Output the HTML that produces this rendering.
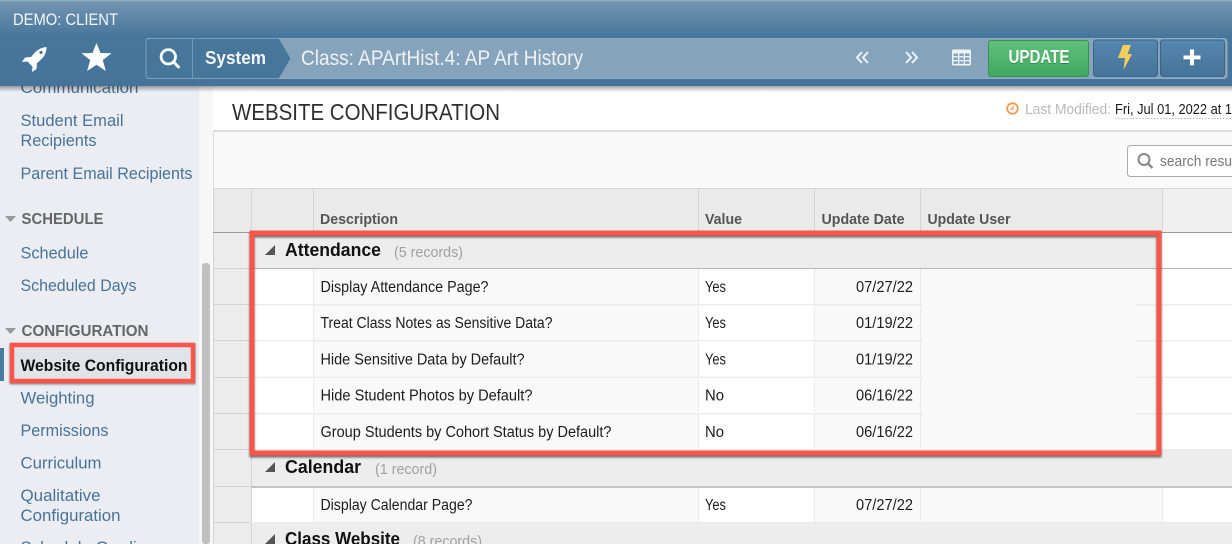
<!DOCTYPE html>
<html><head><meta charset="utf-8"><title>Website Configuration</title>
<style>
html,body{margin:0;padding:0;background:#fff;width:1232px;height:544px;overflow:hidden}
svg{display:block}
text{font-family:"Liberation Sans",sans-serif;white-space:pre}
.nav{fill:#467399;font-size:17px}
.sec{fill:#666;font-size:16px;font-weight:bold}
.th{fill:#555;font-size:15px;font-weight:bold}
.td{fill:#1c1c1c;font-size:15.5px}
.gr{fill:#111;font-size:18.5px;font-weight:bold}
.ct{fill:#a0a0a0;font-size:15px}
</style></head>
<body>
<svg width="1232" height="544" viewBox="0 0 1232 544" xmlns="http://www.w3.org/2000/svg">
<defs>
<linearGradient id="hd" x1="0" y1="0" x2="0" y2="1"><stop offset="0" stop-color="#7496b2"/><stop offset=".43" stop-color="#47769b"/><stop offset="1" stop-color="#457399"/></linearGradient>
<linearGradient id="gb" x1="0" y1="0" x2="0" y2="1"><stop offset="0" stop-color="#60c27d"/><stop offset="1" stop-color="#3fa75c"/></linearGradient>
<linearGradient id="bb" x1="0" y1="0" x2="0" y2="1"><stop offset="0" stop-color="#5687b0"/><stop offset="1" stop-color="#457399"/></linearGradient>
<linearGradient id="sh" x1="0" y1="0" x2="0" y2="1"><stop offset="0" stop-color="#000" stop-opacity=".35"/><stop offset="1" stop-color="#000" stop-opacity="0"/></linearGradient>
</defs>

<!-- sidebar -->
<rect x="0" y="0" width="199" height="544" fill="#ecedf3"/>
<rect x="199" y="0" width="14" height="544" fill="#f7f7f7"/>
<rect x="202" y="263" width="8" height="281" rx="3" fill="#c0c0c0"/>
<text class="nav" x="20.500" y="93" textLength="118" lengthAdjust="spacingAndGlyphs">Communication</text>
<text class="nav" x="20.500" y="126" textLength="103" lengthAdjust="spacingAndGlyphs">Student Email</text>
<text class="nav" x="20.500" y="146" textLength="76" lengthAdjust="spacingAndGlyphs">Recipients</text>
<text class="nav" x="20.500" y="179" textLength="172" lengthAdjust="spacingAndGlyphs">Parent Email Recipients</text>
<polygon points="5,216 16,216 10.500,222" fill="#999"/>
<text class="sec" x="21.500" y="224" textLength="82" lengthAdjust="spacingAndGlyphs">SCHEDULE</text>
<text class="nav" x="20.500" y="258.500" textLength="68" lengthAdjust="spacingAndGlyphs">Schedule</text>
<text class="nav" x="20.500" y="291" textLength="116" lengthAdjust="spacingAndGlyphs">Scheduled Days</text>
<polygon points="5,328 16,328 10.500,334" fill="#999"/>
<text class="sec" x="21.500" y="336" textLength="127" lengthAdjust="spacingAndGlyphs">CONFIGURATION</text>
<rect x="0" y="348" width="4" height="33" fill="#4a7ba2"/>
<rect x="12" y="345" width="181" height="36" fill="#e2e3e8" stroke="#fb5549" stroke-width="4.500" style="filter:drop-shadow(0 1.500px 1px rgba(0,0,0,.5))"/>
<text x="20.500" y="371" font-size="17" font-weight="bold" fill="#111" textLength="167" lengthAdjust="spacingAndGlyphs">Website Configuration</text>
<text class="nav" x="20.500" y="403.500" textLength="74" lengthAdjust="spacingAndGlyphs">Weighting</text>
<text class="nav" x="20.500" y="436" textLength="88" lengthAdjust="spacingAndGlyphs">Permissions</text>
<text class="nav" x="20.500" y="468.500" textLength="81" lengthAdjust="spacingAndGlyphs">Curriculum</text>
<text class="nav" x="20.500" y="501" textLength="80" lengthAdjust="spacingAndGlyphs">Qualitative</text>
<text class="nav" x="20.500" y="521" textLength="100" lengthAdjust="spacingAndGlyphs">Configuration</text>
<text class="nav" x="20.500" y="553" textLength="135" lengthAdjust="spacingAndGlyphs">Schedule Grading</text>

<!-- page title -->
<rect x="213" y="86" width="1019" height="44" fill="#fff"/>
<text x="232" y="120" font-size="23.500" fill="#2e2e2e" textLength="268" lengthAdjust="spacingAndGlyphs">WEBSITE CONFIGURATION</text>
<circle cx="1012.500" cy="108.500" r="5.300" fill="none" stroke="#f59a4d" stroke-width="1.800"/>
<path d="M1013 105.500v3.500h-3" fill="none" stroke="#f59a4d" stroke-width="1.300"/>
<text x="1025" y="114" font-size="14.500" fill="#b9b9b9" textLength="86" lengthAdjust="spacingAndGlyphs">Last Modified:</text>
<text x="1115" y="114" font-size="14.500" fill="#1a1a1a" textLength="117" lengthAdjust="spacingAndGlyphs">Fri, Jul 01, 2022 at 1</text>
<line x1="1115" y1="118.500" x2="1232" y2="118.500" stroke="#bbb" stroke-dasharray="1.500 1.500"/>

<!-- toolbar -->
<rect x="213" y="130" width="1019" height="59" fill="#f9f9f9"/>
<rect x="213" y="130" width="1019" height="2" fill="#ddd"/>
<rect x="213" y="130" width="1" height="59" fill="#ddd"/>
<rect x="1127.500" y="145.500" width="110" height="31" rx="3" fill="#fff" stroke="#aaa"/>
<circle cx="1144" cy="159.500" r="5.500" fill="none" stroke="#888" stroke-width="2"/>
<line x1="1148" y1="163.500" x2="1152.500" y2="168" stroke="#888" stroke-width="2.300"/>
<text x="1160" y="166" font-size="15" fill="#777" textLength="72" lengthAdjust="spacingAndGlyphs">search resu</text>

<!-- table body backgrounds -->
<rect x="213" y="189" width="1019" height="355" fill="#fff"/>
<rect x="213" y="189" width="949" height="43" fill="#eaeaea"/>
<rect x="1162" y="189" width="70" height="43" fill="#efefef"/>
<rect x="213" y="232" width="38" height="312" fill="#ececec"/>
<rect x="313" y="269" width="385" height="253" fill="#f9f9f9"/>
<rect x="814" y="269" width="348" height="253" fill="#f9f9f9"/>
<rect x="251" y="233" width="911" height="35" fill="#ededed"/>
<rect x="251" y="450" width="981" height="36" fill="#ededed"/>
<rect x="251" y="523" width="981" height="21" fill="#ededed"/>

<!-- column lines -->
<g fill="#d4d4d4">
<rect x="213" y="189" width="1" height="355"/>
<rect x="251" y="189" width="1" height="355"/>
<rect x="313" y="189" width="1" height="43"/>
<rect x="698" y="189" width="1" height="43"/>
<rect x="814" y="189" width="1" height="43"/>
<rect x="920" y="189" width="1" height="43"/>
<rect x="1162" y="189" width="1" height="43"/>
</g>
<g stroke="#dedede" stroke-dasharray="1 1">
<line x1="313.500" y1="269" x2="313.500" y2="450"/><line x1="698.500" y1="269" x2="698.500" y2="450"/><line x1="814.500" y1="269" x2="814.500" y2="450"/><line x1="920.500" y1="269" x2="920.500" y2="450"/>
<line x1="313.500" y1="487" x2="313.500" y2="522"/><line x1="698.500" y1="487" x2="698.500" y2="522"/><line x1="814.500" y1="487" x2="814.500" y2="522"/><line x1="920.500" y1="487" x2="920.500" y2="522"/><line x1="1162.500" y1="487" x2="1162.500" y2="522"/>
</g>

<!-- row lines -->
<rect x="213" y="188" width="1019" height="1" fill="#d6d6d6"/>
<rect x="213" y="232" width="1019" height="1" fill="#9a9a9a"/>
<rect x="251" y="268" width="981" height="1" fill="#b5b5b5"/>
<rect x="251" y="486" width="981" height="2" fill="#c4c4c4"/>
<g fill="#ececec">
<rect x="251" y="304" width="672" height="1.500"/><rect x="1136" y="304" width="96" height="1.500"/>
<rect x="251" y="340" width="672" height="1.500"/><rect x="1136" y="340" width="96" height="1.500"/>
<rect x="251" y="376.500" width="672" height="1.500"/><rect x="1136" y="376.500" width="96" height="1.500"/>
<rect x="251" y="413" width="672" height="1.500"/><rect x="1136" y="413" width="96" height="1.500"/>
<rect x="251" y="449" width="981" height="1.500"/>
<rect x="251" y="522" width="981" height="1.500"/>
</g>
<g fill="#d4d4d4">
<rect x="213" y="268" width="38" height="1"/><rect x="213" y="304" width="38" height="1"/><rect x="213" y="340" width="38" height="1"/><rect x="213" y="377" width="38" height="1"/><rect x="213" y="413" width="38" height="1"/><rect x="213" y="449" width="38" height="1"/><rect x="213" y="486" width="38" height="1"/><rect x="213" y="522" width="38" height="1"/>
</g>

<!-- header row text -->
<text class="th" x="320" y="224" textLength="78" lengthAdjust="spacingAndGlyphs">Description</text>
<text class="th" x="705" y="224" textLength="37" lengthAdjust="spacingAndGlyphs">Value</text>
<text class="th" x="821.500" y="224" textLength="83" lengthAdjust="spacingAndGlyphs">Update Date</text>
<text class="th" x="927.500" y="224" textLength="83" lengthAdjust="spacingAndGlyphs">Update User</text>

<!-- groups -->
<polygon points="275,245 275,255 265,255" fill="#555"/>
<text class="gr" x="285" y="256" textLength="96" lengthAdjust="spacingAndGlyphs">Attendance</text>
<text class="ct" x="394" y="257" textLength="69" lengthAdjust="spacingAndGlyphs">(5 records)</text>
<polygon points="275,462 275,472 265,472" fill="#555"/>
<text class="gr" x="285" y="473" textLength="76" lengthAdjust="spacingAndGlyphs">Calendar</text>
<text class="ct" x="375" y="474" textLength="62" lengthAdjust="spacingAndGlyphs">(1 record)</text>
<polygon points="275,534 275,544 265,544" fill="#555"/>
<text class="gr" x="285" y="545" textLength="115" lengthAdjust="spacingAndGlyphs">Class Website</text>
<text class="ct" x="413" y="546" textLength="69" lengthAdjust="spacingAndGlyphs">(8 records)</text>

<!-- rows -->
<text class="td" x="320.500" y="292" textLength="168" lengthAdjust="spacingAndGlyphs">Display Attendance Page?</text>
<text class="td" x="705" y="292" textLength="21" lengthAdjust="spacingAndGlyphs">Yes</text>
<text class="td" x="856" y="292" textLength="57" lengthAdjust="spacingAndGlyphs">07/27/22</text>
<text class="td" x="320.500" y="328" textLength="232" lengthAdjust="spacingAndGlyphs">Treat Class Notes as Sensitive Data?</text>
<text class="td" x="705" y="328" textLength="21" lengthAdjust="spacingAndGlyphs">Yes</text>
<text class="td" x="856" y="328" textLength="57" lengthAdjust="spacingAndGlyphs">01/19/22</text>
<text class="td" x="320.500" y="364.500" textLength="204" lengthAdjust="spacingAndGlyphs">Hide Sensitive Data by Default?</text>
<text class="td" x="705" y="364.500" textLength="21" lengthAdjust="spacingAndGlyphs">Yes</text>
<text class="td" x="856" y="364.500" textLength="57" lengthAdjust="spacingAndGlyphs">01/19/22</text>
<text class="td" x="320.500" y="400.500" textLength="212" lengthAdjust="spacingAndGlyphs">Hide Student Photos by Default?</text>
<text class="td" x="705" y="400.500" textLength="19" lengthAdjust="spacingAndGlyphs">No</text>
<text class="td" x="856" y="400.500" textLength="57" lengthAdjust="spacingAndGlyphs">06/16/22</text>
<text class="td" x="320.500" y="437" textLength="291" lengthAdjust="spacingAndGlyphs">Group Students by Cohort Status by Default?</text>
<text class="td" x="705" y="437" textLength="19" lengthAdjust="spacingAndGlyphs">No</text>
<text class="td" x="856" y="437" textLength="57" lengthAdjust="spacingAndGlyphs">06/16/22</text>
<text class="td" x="320.500" y="510" textLength="152" lengthAdjust="spacingAndGlyphs">Display Calendar Page?</text>
<text class="td" x="705" y="510" textLength="21" lengthAdjust="spacingAndGlyphs">Yes</text>
<text class="td" x="856" y="510" textLength="57" lengthAdjust="spacingAndGlyphs">07/27/22</text>

<!-- red annotation -->
<rect x="252" y="233" width="907" height="220" fill="none" stroke="#fb5549" stroke-width="5" style="filter:drop-shadow(0 2px 1px rgba(0,0,0,.55))"/>

<!-- top header -->
<rect x="0" y="86" width="1232" height="6" fill="url(#sh)"/>
<rect x="0" y="0" width="1232" height="86" fill="url(#hd)"/>
<rect x="0" y="0" width="1232" height="1.500" fill="#8fabc2"/>
<text x="13" y="25" font-size="16.500" fill="#f4f7fa" textLength="105" lengthAdjust="spacingAndGlyphs">DEMO: CLIENT</text>

<path d="M46.500 47c-5 .5-9 2.500-12.500 6.500l-3 3.500-6 .5-3 4.500 5.500-.5 2.500 2.500 2.500 2.500-.5 5.500 4.500-3 .5-6 3.500-3c4-3.500 6-8 6-12.500z" fill="#fff"/>
<circle cx="41" cy="52.500" r="1.600" fill="#47769b"/>
<polygon points="96.500,43 100.500,53 111.500,53.300 102.800,60.100 105.900,71 96.500,64.700 87.100,71 90.200,60.100 81.500,53.300 92.500,53" fill="#fff"/>

<!-- breadcrumb bar -->
<rect x="146" y="38.500" width="1081" height="40" rx="3" fill="#86a3bc" stroke="#8cabc5"/>
<path d="M149 39h130l11.500 19.500L279 78h-130a3 3 0 0 1-3-3V42a3 3 0 0 1 3-3z" fill="#47769b"/>
<path d="M149 38.500h130M149 78.500h130M146 42v33" stroke="#7c9eba" fill="none"/>
<rect x="192" y="39" width="1" height="39" fill="#7597b3"/>
<circle cx="168.300" cy="56.800" r="7.200" fill="none" stroke="#fff" stroke-width="2.800"/>
<line x1="173.500" y1="62" x2="178.500" y2="67" stroke="#fff" stroke-width="3" stroke-linecap="round"/>
<text x="205" y="64" font-size="18.500" font-weight="bold" fill="#f2f6f9" textLength="61" lengthAdjust="spacingAndGlyphs">System</text>
<text x="301" y="65" font-size="21" fill="#eef2f6" textLength="282" lengthAdjust="spacingAndGlyphs">Class: APArtHist.4: AP Art History</text>

<g fill="none" stroke="#eef3f7" stroke-width="2">
<path d="M862 52l-5 5.500 5 5.500M868 52l-5 5.500 5 5.500"/>
<path d="M906 52l5 5.500-5 5.500M912 52l5 5.500-5 5.500"/>
</g>
<rect x="952" y="49.500" width="19" height="16" rx="1.500" fill="#eef3f7"/>
<g fill="#86a3bc">
<rect x="953.500" y="53.500" width="4.500" height="2.600"/><rect x="959.300" y="53.500" width="4.500" height="2.600"/><rect x="965" y="53.500" width="4.500" height="2.600"/>
<rect x="953.500" y="57.400" width="4.500" height="2.600"/><rect x="959.300" y="57.400" width="4.500" height="2.600"/><rect x="965" y="57.400" width="4.500" height="2.600"/>
<rect x="953.500" y="61.300" width="4.500" height="2.600"/><rect x="959.300" y="61.300" width="4.500" height="2.600"/><rect x="965" y="61.300" width="4.500" height="2.600"/>
</g>

<rect x="988.500" y="40.500" width="100" height="36" rx="2.500" fill="url(#gb)" stroke="#35934f"/>
<text x="1008.500" y="63" font-size="18" font-weight="bold" fill="#f6fbf7" textLength="61" lengthAdjust="spacingAndGlyphs" style="filter:drop-shadow(0 1px 0 rgba(0,0,0,.25))">UPDATE</text>

<rect x="1093.500" y="40" width="64" height="36.500" rx="2.500" fill="url(#bb)" stroke="#3c6585"/>
<polygon points="1123,45 1131,45 1127.500,54 1132,54 1123.500,70 1125,58 1118,58" fill="#f5cd5b"/>
<rect x="1160.500" y="40" width="64" height="36.500" rx="2.500" fill="url(#bb)" stroke="#3c6585"/>
<path d="M1190 49.500h4v6h6.500v4h-6.500v6h-4v-6h-6.500v-4h6.500z" fill="#fff" style="filter:drop-shadow(0 1px 0 rgba(0,0,0,.3))"/>
</svg>
</body></html>
